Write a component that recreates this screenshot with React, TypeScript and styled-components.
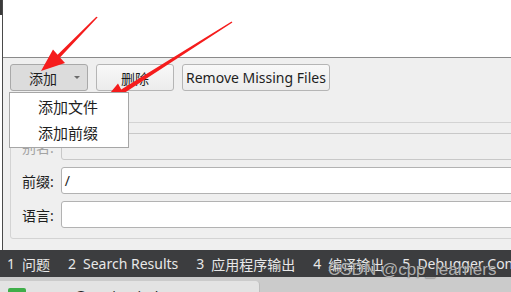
import React from "react";
import styled, { createGlobalStyle } from "styled-components";

const GlobalStyle = createGlobalStyle`
  html, body {
    margin: 0;
    padding: 0;
    background: #ffffff;
  }
  body {
    font-family: "Noto Sans", "Noto Sans CJK SC", sans-serif;
    font-size: 14px;
  }
`;

const Screen = styled.div`
  position: relative;
  width: 511px;
  height: 292px;
  overflow: hidden;
  display: flex;
  flex-direction: column;
`;

const MainRow = styled.div`
  display: flex;
  height: 250px;
`;

const Gutter = styled.div`
  flex-shrink: 0;
  width: 2px;
  background: #ffffff;
  display: flex;
  flex-direction: column;
`;

const GutterCap = styled.div`
  height: 15px;
  background: #3a3a3a;
`;

const Window = styled.div`
  flex: 1;
  min-width: 0;
  overflow: hidden;
  display: flex;
  flex-direction: column;
  border-left: 1px solid #4a4a4a;
`;

const TopArea = styled.div`
  height: 57px;
  background: #ffffff;
  border-bottom: 1px solid #8a8a8a;
`;

const Panel = styled.div`
  flex: 1;
  background: #efefef;
  padding: 6px 0 0 7px;
  display: flex;
  flex-direction: column;
`;

const ButtonRow = styled.div`
  position: relative;
  display: flex;
  gap: 8px;
  height: 27px;
`;

const Button = styled.div<{ $pressed?: boolean; $width?: number }>`
  box-sizing: border-box;
  height: 27px;
  width: ${(p) => (p.$width ? `${p.$width}px` : "auto")};
  padding: 0 3px;
  display: flex;
  align-items: center;
  justify-content: center;
  border: 1px solid ${(p) => (p.$pressed ? "#a9a9a9" : "#b5b5b5")};
  border-radius: 3px;
  background: ${(p) =>
    p.$pressed ? "#dcdcdc" : "linear-gradient(#f8f8f8, #ececec)"};
  color: #1e1e1e;
  font-size: 14px;
  white-space: nowrap;
`;

const DropButton = styled(Button)`
  justify-content: space-between;
  padding: 0 7px 0 18px;
`;

const Caret = styled.span`
  width: 0;
  height: 0;
  border-left: 3px solid transparent;
  border-right: 3px solid transparent;
  border-top: 3px solid #6a6a6a;
`;

const Menu = styled.div`
  position: absolute;
  top: 28px;
  left: -1px;
  width: 120px;
  box-sizing: border-box;
  padding: 1px 0;
  background: #ffffff;
  border: 1px solid #a6a6a6;
  z-index: 5;
`;

const MenuItem = styled.div`
  height: 26px;
  line-height: 26px;
  padding-left: 28px;
  font-size: 15px;
  color: #1e1e1e;
`;

const GroupBox = styled.div`
  flex-shrink: 0;
  margin-top: 31px;
  width: 520px;
  box-sizing: border-box;
  border: 1px solid #d3d3d3;
  border-radius: 3px;
  padding: 10px 0 10px 11px;
  display: grid;
  grid-template-columns: auto 1fr;
  column-gap: 7px;
  row-gap: 7px;
  align-items: center;
`;

const Label = styled.span<{ $disabled?: boolean }>`
  font-size: 14px;
  color: ${(p) => (p.$disabled ? "#a3a3a3" : "#1e1e1e")};
`;

const Field = styled.div<{ $disabled?: boolean }>`
  box-sizing: border-box;
  height: 27px;
  padding-left: 3px;
  display: flex;
  align-items: center;
  border: 1px solid ${(p) => (p.$disabled ? "#c8c8c8" : "#b2b2b2")};
  border-radius: 3px;
  background: ${(p) => (p.$disabled ? "#efefef" : "#ffffff")};
  color: #1e1e1e;
  font-size: 14px;
`;

const StatusBar = styled.div`
  height: 27px;
  background: #3c3d3f;
  display: flex;
  align-items: center;
  gap: 18px;
  padding-left: 7px;
  color: #e8e8e8;
  font-size: 14px;
  white-space: nowrap;
`;

const StatusItem = styled.span`
  display: flex;
  gap: 7px;
`;

const TaskStrip = styled.div`
  flex: 1;
  background: #cbcbcb;
  display: flex;
  align-items: flex-end;
`;

const Task = styled.div`
  width: 260px;
  height: 11px;
  background: #e3e3e3;
  border-top-right-radius: 4px;
  border-right: 1px solid #bdbdbd;
  display: flex;
  align-items: flex-start;
  gap: 48px;
  padding: 7px 0 0 8px;
  box-sizing: border-box;
  overflow: hidden;
`;

const TaskIcon = styled.div`
  flex-shrink: 0;
  width: 18px;
  height: 12px;
  background: #3fae49;
  border-radius: 2px;
`;

const TaskTitle = styled.span`
  font-size: 14px;
  line-height: 1;
  color: #222;
  margin-top: 2px;
  white-space: nowrap;
`;

const Watermark = styled.div`
  position: absolute;
  left: 328px;
  top: 260px;
  font-family: "Liberation Sans", sans-serif;
  font-size: 17px;
  color: rgba(190, 190, 190, 0.9);
  text-shadow: 0 0 1px rgba(60, 60, 60, 1);
  white-space: nowrap;
  pointer-events: none;
`;

const Overlay = styled.svg`
  position: absolute;
  left: 0;
  top: 0;
  pointer-events: none;
`;

const statusItems = [
  ["1", "问题"],
  ["2", "Search Results"],
  ["3", "应用程序输出"],
  ["4", "编译输出"],
  ["5", "Debugger Console"],
];

export default function App() {
  return (
    <>
      <GlobalStyle />
      <Screen>
        <MainRow>
          <Gutter>
            <GutterCap />
          </Gutter>
          <Window>
            <TopArea />
            <Panel>
              <ButtonRow>
                <DropButton $pressed $width={78}>
                  添加
                  <Caret />
                </DropButton>
                <Button $width={78}>删除</Button>
                <Button>Remove Missing Files</Button>
                <Menu>
                  <MenuItem>添加文件</MenuItem>
                  <MenuItem>添加前缀</MenuItem>
                </Menu>
              </ButtonRow>
              <GroupBox>
                <Label $disabled>别名:</Label>
                <Field $disabled />
                <Label>前缀:</Label>
                <Field>/</Field>
                <Label>语言:</Label>
                <Field />
              </GroupBox>
            </Panel>
          </Window>
        </MainRow>
        <StatusBar>
          {statusItems.map(([n, t]) => (
            <StatusItem key={n}>
              <span>{n}</span>
              <span>{t}</span>
            </StatusItem>
          ))}
        </StatusBar>
        <TaskStrip>
          <Task>
            <TaskIcon />
            <TaskTitle>● MainWindow - Qt Creator</TaskTitle>
          </Task>
        </TaskStrip>
        <Watermark>CSDN @cpp_learners</Watermark>
        <Overlay width="511" height="292" viewBox="0 0 511 292">
          <polygon
            fill="#f51c1c"
            points="97.7,17.3 60,57.6 65,63 41,71 53,49.5 57.6,54.8 96.3,16.7"
          />
          <polygon
            fill="#f51c1c"
            points="232.4,22.6 123.5,93.4 127,99.5 100,105 118,83.5 121.2,89.6 231.6,21.4"
          />
        </Overlay>
      </Screen>
    </>
  );
}
